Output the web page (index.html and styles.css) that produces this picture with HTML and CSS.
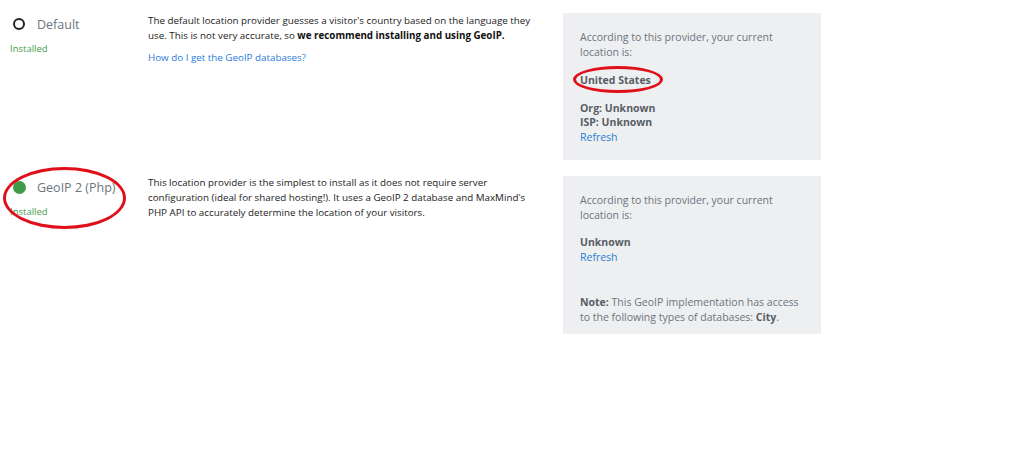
FILE: index.html
```html
<!DOCTYPE html>
<html>
<head>
<meta charset="utf-8">
<link rel="stylesheet" href="styles.css">
</head>
<body>
<div class="page">
  <div class="row row-first">
    <div class="name-col">
      <div class="provider">
        <span class="radio"></span>
        <span class="pname">Default</span>
      </div>
      <div class="installed">Installed</div>
    </div>
    <div class="desc-col">
      <p class="desc">The default location provider guesses a visitor's country based on the language they use. This is not very accurate, so <strong>we recommend installing and using GeoIP.</strong></p>
      <a class="link" href="#">How do I get the GeoIP databases?</a>
    </div>
    <div class="panel panel-first">
      <p class="muted">According to this provider, your current location is:</p>
      <p class="strong country"><span>United States</span></p>
      <p class="strong">Org: Unknown<br>ISP: Unknown</p>
      <a class="link" href="#">Refresh</a>
    </div>
  </div>
  <div class="row row-second">
    <div class="name-col">
      <div class="provider">
        <span class="dot"></span>
        <span class="pname">GeoIP 2 (Php)</span>
      </div>
      <div class="installed">Installed</div>
    </div>
    <div class="desc-col">
      <p class="desc">This location provider is the simplest to install as it does not require server configuration (ideal for shared hosting!). It uses a GeoIP 2 database and MaxMind's PHP API to accurately determine the location of your visitors.</p>
    </div>
    <div class="panel panel-second">
      <p class="muted">According to this provider, your current location is:</p>
      <p class="strong unknown">Unknown</p>
      <a class="link" href="#">Refresh</a>
      <p class="muted note"><b>Note:</b> This GeoIP implementation has access to the following types of databases: <b class="city">City</b>.</p>
    </div>
  </div>
  <div class="mark mark-provider"></div>
  <div class="mark mark-country"></div>
</div>
</body>
</html>
```
FILE: styles.css
```css
* { box-sizing: border-box; }
html, body { margin: 0; padding: 0; background: #fff; }
body {
  font-family: "Open Sans", "Noto Sans", sans-serif;
  color: #212529;
  width: 1024px;
  height: 457px;
  overflow: hidden;
}
.page { position: relative; width: 1024px; height: 457px; }
p { margin: 0; }
.row {
  display: grid;
  grid-template-columns: 148px 415px 258px;
}
.row-first { padding-top: 13px; height: 176px; }
.row-second { height: 170px; }
.name-col { padding-left: 10px; }
.provider { display: flex; align-items: center; height: 20px; margin-top: 1px; }
.radio {
  width: 12px; height: 12px; border: 2px solid #222; border-radius: 50%;
  margin-left: 3px; margin-right: 12px;
}
.dot {
  width: 13px; height: 13px; background: #3f9b48; border-radius: 50%;
  margin-left: 3px; margin-right: 11px;
}
.pname { font-size: 12.5px; color: #6c757d; }
.installed { font-size: 9.5px; color: #4a9d4f; margin-top: 8px; }
.desc-col { padding-top: 1px; }
.row-second .desc-col { padding-top: 0; }
.desc { font-size: 9.8px; line-height: 14.8px; color: #222; width: 392px; }
.desc strong { font-weight: 700; color: #111; }
.link { display: inline-block; font-size: 9.8px; color: #2b7bd8; text-decoration: none; }
.desc-col .link { margin-top: 7px; }
.panel {
  background: #eeeff1;
  padding: 17px 16px 16px 17px;
  font-size: 10.5px;
  line-height: 14.5px;
  color: #6c7480;
}
.panel-first { height: 147px; }
.panel-second { height: 158px; }
.muted { color: #6c7480; }
.strong { font-weight: 700; color: #585e66; }
.country { margin-top: 14px; margin-bottom: 13px; }
.unknown { margin-top: 13px; }
.panel .link { font-size: 10.5px; display: block; }
.note { margin-top: 31px; }
.note b { color: #585e66; }
.mark {
  position: absolute;
  border: 3px solid #e0101b;
  border-radius: 50%;
}
.mark-provider { left: 3px; top: 167px; width: 123px; height: 62px; }
.mark-country { left: 573px; top: 66px; width: 90px; height: 27px; }
```
